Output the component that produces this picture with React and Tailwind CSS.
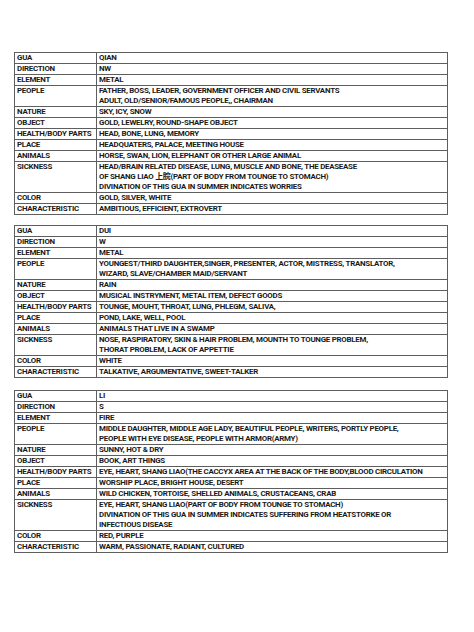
import React from "react";

const tables = [
  [
    ["GUA", ["QIAN"]],
    ["DIRECTION", ["NW"]],
    ["ELEMENT", ["METAL"]],
    ["PEOPLE", ["FATHER, BOSS, LEADER, GOVERNMENT OFFICER AND CIVIL SERVANTS", "ADULT, OLD/SENIOR/FAMOUS PEOPLE,, CHAIRMAN"]],
    ["NATURE", ["SKY, ICY, SNOW"]],
    ["OBJECT", ["GOLD, LEWELRY, ROUND-SHAPE OBJECT"]],
    ["HEALTH/BODY PARTS", ["HEAD, BONE, LUNG, MEMORY"]],
    ["PLACE", ["HEADQUATERS, PALACE, MEETING HOUSE"]],
    ["ANIMALS", ["HORSE, SWAN, LION, ELEPHANT OR OTHER LARGE ANIMAL"]],
    ["SICKNESS", ["HEAD/BRAIN RELATED DISEASE, LUNG, MUSCLE AND BONE, THE DEASEASE", "OF SHANG LIAO 上脘(PART OF BODY FROM TOUNGE TO STOMACH)", "DIVINATION OF THIS GUA IN SUMMER INDICATES WORRIES"]],
    ["COLOR", ["GOLD, SILVER, WHITE"]],
    ["CHARACTERISTIC", ["AMBITIOUS, EFFICIENT, EXTROVERT"]],
  ],
  [
    ["GUA", ["DUI"]],
    ["DIRECTION", ["W"]],
    ["ELEMENT", ["METAL"]],
    ["PEOPLE", ["YOUNGEST/THIRD DAUGHTER,SINGER, PRESENTER, ACTOR, MISTRESS, TRANSLATOR,", "WIZARD, SLAVE/CHAMBER MAID/SERVANT"]],
    ["NATURE", ["RAIN"]],
    ["OBJECT", ["MUSICAL INSTRYMENT, METAL ITEM, DEFECT GOODS"]],
    ["HEALTH/BODY PARTS", ["TOUNGE, MOUHT, THROAT, LUNG, PHLEGM, SALIVA,"]],
    ["PLACE", ["POND, LAKE, WELL, POOL"]],
    ["ANIMALS", ["ANIMALS THAT LIVE IN A SWAMP"]],
    ["SICKNESS", ["NOSE, RASPIRATORY, SKIN & HAIR PROBLEM, MOUNTH TO TOUNGE PROBLEM,", "THORAT PROBLEM, LACK OF APPETTIE"]],
    ["COLOR", ["WHITE"]],
    ["CHARACTERISTIC", ["TALKATIVE, ARGUMENTATIVE, SWEET-TALKER"]],
  ],
  [
    ["GUA", ["LI"]],
    ["DIRECTION", ["S"]],
    ["ELEMENT", ["FIRE"]],
    ["PEOPLE", ["MIDDLE DAUGHTER, MIDDLE AGE LADY, BEAUTIFUL PEOPLE, WRITERS, PORTLY PEOPLE,", "PEOPLE WITH EYE DISEASE, PEOPLE WITH ARMOR(ARMY)"]],
    ["NATURE", ["SUNNY, HOT & DRY"]],
    ["OBJECT", ["BOOK, ART THINGS"]],
    ["HEALTH/BODY PARTS", ["EYE, HEART, SHANG LIAO(THE CACCYX AREA AT THE BACK OF THE BODY,BLOOD CIRCULATION"]],
    ["PLACE", ["WORSHIP PLACE, BRIGHT HOUSE, DESERT"]],
    ["ANIMALS", ["WILD CHICKEN, TORTOISE, SHELLED ANIMALS, CRUSTACEANS, CRAB"]],
    ["SICKNESS", ["EYE, HEART, SHANG LIAO(PART OF BODY FROM TOUNGE TO STOMACH)", "DIVINATION OF THIS GUA IN SUMMER INDICATES SUFFERING FROM HEATSTORKE OR", "INFECTIOUS DISEASE"]],
    ["COLOR", ["RED, PURPLE"]],
    ["CHARACTERISTIC", ["WARM, PASSIONATE, RADIANT, CULTURED"]],
  ],
];

const GuaTable = ({ rows, className = "" }) => (
  <table className={`w-[434px] border-collapse border border-[#5e5e5e] ${className}`}>
    <tbody>
      {rows.map(([label, lines]) => (
        <tr key={label}>
          <td className="w-[82px] border border-[#5e5e5e] pl-[2px] align-top">{label}</td>
          <td className="border border-[#5e5e5e] pl-[2px] align-top">
            {lines.map((l, i) => (
              <div key={i} className="h-[10px] whitespace-nowrap">{l}</div>
            ))}
          </td>
        </tr>
      ))}
    </tbody>
  </table>
);

export default function App() {
  return (
    <main
      className="w-[474px] h-[632px] bg-white text-[#1a1a1a] font-bold text-[7.9px] leading-[10px] tracking-[-0.25px] pt-[52px] pl-[14px]"
      style={{ fontFamily: "Roboto, 'Noto Sans CJK SC', sans-serif" }}
    >
      <GuaTable rows={tables[0]} />
      <GuaTable rows={tables[1]} className="mt-[10px]" />
      <GuaTable rows={tables[2]} className="mt-[12px]" />
    </main>
  );
}
